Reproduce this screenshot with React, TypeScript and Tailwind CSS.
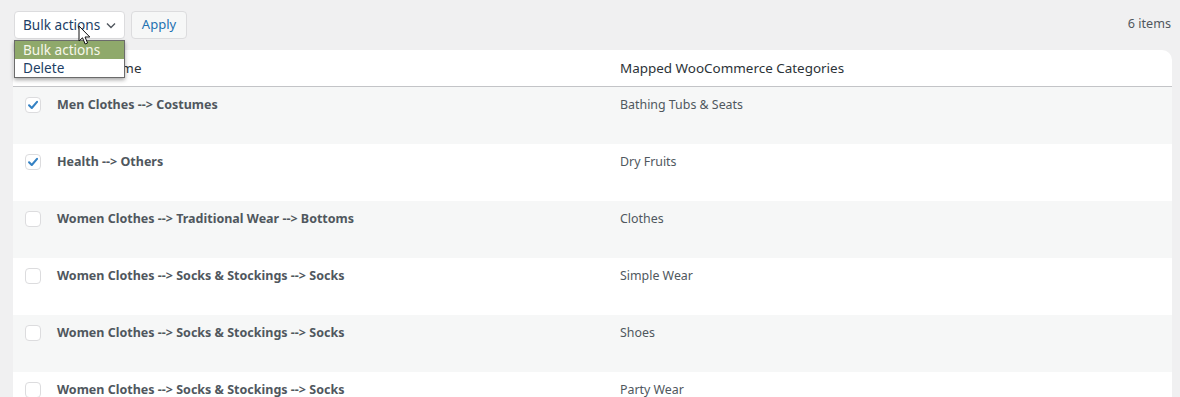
import React from "react";

const rows = [
  { name: "Men Clothes --> Costumes", mapped: "Bathing Tubs & Seats", checked: true },
  { name: "Health --> Others", mapped: "Dry Fruits", checked: true },
  { name: "Women Clothes --> Traditional Wear --> Bottoms", mapped: "Clothes", checked: false },
  { name: "Women Clothes --> Socks & Stockings --> Socks", mapped: "Simple Wear", checked: false },
  { name: "Women Clothes --> Socks & Stockings --> Socks", mapped: "Shoes", checked: false },
  { name: "Women Clothes --> Socks & Stockings --> Socks", mapped: "Party Wear", checked: false },
];

function Checkbox({ checked }: { checked: boolean }) {
  return (
    <span className="flex h-4 w-4 items-center justify-center rounded-[4px] border border-[#dcdcde] bg-white">
      {checked && (
        <svg viewBox="0 0 16 16" className="h-[14px] w-[14px]">
          <path d="M3.5 8.3 L6.6 11.4 L12.6 4.4" fill="none" stroke="#3582c4" strokeWidth="2.4" strokeLinecap="round" strokeLinejoin="round" />
        </svg>
      )}
    </span>
  );
}

export default function App() {
  return (
    <div
      className="h-[397px] w-[1180px] overflow-hidden bg-[#f0f0f1] text-[12.4px] text-[#50575e]"
      style={{ fontFamily: '"Noto Sans", "Open Sans", sans-serif' }}
    >
      <div className="relative flex h-[50px] items-start pl-[14px] pr-2 pt-[11px]">
        <div className="relative">
          <div className="flex h-[28px] w-[111px] items-center justify-between rounded-[4px] border border-[#dcdcde] bg-white pl-[8px] pr-[7px] text-[13.6px] text-[#1d3f66]">
            <span>Bulk actions</span>
            <svg viewBox="0 0 12 12" className="h-[12px] w-[12px]">
              <path d="M2 4.5 L6 8.5 L10 4.5" fill="none" stroke="#50575e" strokeWidth="1.4" />
            </svg>
          </div>
          <div className="absolute left-0 top-[29px] z-10 w-[111px] border border-[#6b6b6b] bg-white text-[13.6px] leading-[18px] shadow-[0_2px_4px_rgba(0,0,0,0.35)]">
            <div className="bg-[#8fa96b] px-[8px] text-[#f7f7ea]">Bulk actions</div>
            <div className="px-[8px] text-[#1d3f66]">Delete</div>
          </div>
          <svg viewBox="0 0 14 22" className="absolute left-[64px] top-[14px] z-20 h-[22px] w-[14px]">
            <path d="M1 1 L1 16 L4.5 12.8 L7.2 19 L9.6 18 L7 12 L11.8 12 Z" fill="#fff" stroke="#111" strokeWidth="1" strokeLinejoin="round" />
          </svg>
        </div>
        <button className="ml-[6px] flex h-[28px] w-[56px] items-center justify-center rounded-[4px] border border-[#dcdcde] bg-[#f6f7f7] text-[13px] text-[#2271b1]">
          Apply
        </button>
        <div className="ml-auto mr-[1px] pt-[4px] text-[12.6px] text-[#50575e]">6 items</div>
      </div>
      <div className="ml-[13px] w-[1159px] overflow-hidden rounded-tr-[10px] rounded-tl-[4px] bg-white">
        <div className="flex h-[37px] items-center border-b border-[#c3c4c7] text-[13.45px] text-[#2c3338]">
          <div className="w-[44px]" />
          <div className="w-[563px]">Source Name</div>
          <div>Mapped WooCommerce Categories</div>
        </div>
        {rows.map((r, i) => (
          <div
            key={i}
            className={`flex h-[57px] items-start pt-[9px] ${i % 2 === 0 ? "bg-[#f6f7f7]" : "bg-white"}`}
          >
            <div className="flex w-[44px] justify-start pl-[12px] pt-[1px]">
              <Checkbox checked={r.checked} />
            </div>
            <div className="w-[563px] text-[12.5px] font-bold text-[#50575e]">{r.name}</div>
            <div className="text-[#50575e]">{r.mapped}</div>
          </div>
        ))}
      </div>
    </div>
  );
}
